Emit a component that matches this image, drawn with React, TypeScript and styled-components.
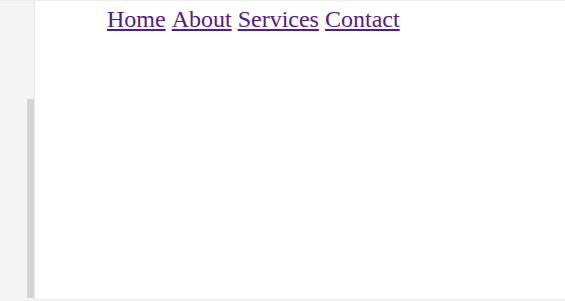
import React from 'react'
import styled, { createGlobalStyle } from 'styled-components'

const GlobalStyle = createGlobalStyle`
  html, body {
    margin: 0;
    padding: 0;
    background: #f4f4f4;
  }
`

const links = ['Home', 'About', 'Services', 'Contact']

const App: React.FC = () => {
  return (
    <>
      <GlobalStyle />
      <Page>
        <Sidebar>
          <Track />
        </Sidebar>
        <Main>
          <Nav>
            {links.map((l) => (
              <NavLink key={l} href="#">
                {l}
              </NavLink>
            ))}
          </Nav>
        </Main>
      </Page>
    </>
  )
}

const Page = styled.div`
  display: flex;
  width: 565px;
  height: 301px;
  background: #f4f4f4;
  border-top: 1px solid #ececec;
  box-sizing: border-box;
`

const Sidebar = styled.div`
  width: 35px;
  flex-shrink: 0;
  display: flex;
  flex-direction: column;
  justify-content: flex-end;
  align-items: flex-end;
  padding-bottom: 3px;
  box-sizing: border-box;
  border-right: 1px solid #e8e8e8;
`

const Track = styled.div`
  width: 7px;
  height: 199px;
  background: #d4d4d4;
`

const Main = styled.div`
  flex: 1;
  background: #fff;
  margin-bottom: 3px;
`

const Nav = styled.nav`
  padding: 5px 0 0 72px;
  font-family: 'Liberation Serif', 'Times New Roman', serif;
  font-size: 24px;
  display: flex;
  gap: 6px;
`

const NavLink = styled.a`
  color: #551a8b;
  text-decoration: underline;
`

export default App
